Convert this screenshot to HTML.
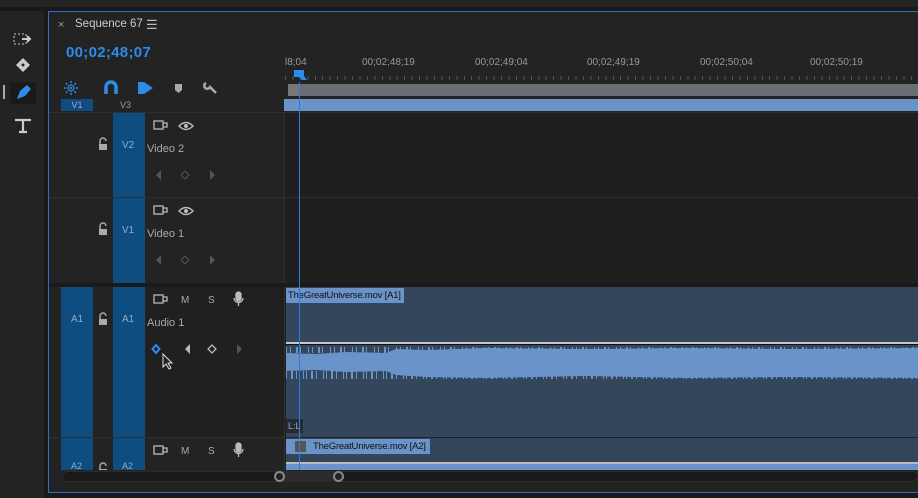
<!DOCTYPE html>
<html><head><meta charset="utf-8"><style>
*{margin:0;padding:0;box-sizing:border-box}
body{width:918px;height:498px;background:#191919;overflow:hidden;position:relative;font-family:"Liberation Sans",sans-serif;color:#b8b8b8}
.a{position:absolute;white-space:nowrap}
.t{font-size:10px;color:#aaa}
</style></head><body>
<div class="a" style="left:0;top:0;width:918px;height:7px;background:#232323"></div>
<!-- left toolbar -->
<div class="a" style="left:0;top:11px;width:44px;height:487px;background:#232323"></div>
<svg class="a" style="left:0;top:25px" width="44" height="110">
<rect x="14" y="9" width="12" height="10" fill="none" stroke="#ccc" stroke-dasharray="2 2"/>
<path d="M22 14h8M27 11l3 3-3 3" stroke="#ccc" stroke-width="2" fill="none"/>
<path d="M16 40l7-7 7 7-7 7z" fill="#ccc"/><circle cx="23" cy="40" r="1.5" fill="#232323"/>
<rect x="10" y="57" width="26" height="22" rx="2" fill="#1a1a1a"/>
<path d="M17 74l3-8 7-6 4 4-6 7z" fill="#2d8ceb"/>
<path d="M15 95h16M23 95v12M19 107h8" stroke="#ccc" stroke-width="2.2" fill="none"/>
<rect x="3" y="60" width="2" height="14" fill="#aaa"/>
</svg>
<!-- panel -->
<div class="a" style="left:48px;top:11px;width:872px;height:482px;background:#232323;border:1px solid #2e6fc4;border-right:none"></div>
<div class="a t" style="left:58px;top:19px;font-size:11px;color:#999">×</div>
<div class="a" style="left:75px;top:18px;font-size:11.5px;color:#ccc">Sequence 67</div>
<div class="a" style="left:146px;top:17px;font-size:13px;color:#bbb">☰</div>
<div class="a" style="left:66px;top:44px;font-size:15px;color:#2d8ceb;font-weight:bold;letter-spacing:.3px">00;02;48;07</div>
<svg class="a" style="left:60px;top:78px" width="170" height="20">
<path d="M11 3v14M4 10h14M6 5l10 10M16 5L6 15" stroke="#2d8ceb" stroke-width="1.5" stroke-dasharray="2 1"/>
<path d="M46 16v-7a5 5 0 0 1 10 0v7" stroke="#2d8ceb" stroke-width="3.5" fill="none"/>
<path d="M78 4h6v12h-6zM84 4l9 6-9 6z" fill="#2d8ceb"/>
<path d="M115 6h7v6l-3.5 3-3.5-3z" fill="#aaa"/>
<path d="M146 5a3 3 0 1 0 4 4l6 6" stroke="#aaa" stroke-width="2.5" fill="none"/>
</svg>
<div class="a" style="left:61px;top:99px;width:32px;height:12px;background:#0e4d80;font-size:9px;color:#aac;text-align:center;line-height:12px">V1</div>
<div class="a" style="left:120px;top:100px;font-size:9px;color:#999">V3</div>
<!-- timeline bg -->
<div class="a" style="left:285px;top:112px;width:633px;height:358px;background:#1f1f1f"></div>
<div class="a" style="left:284px;top:112px;width:1px;height:358px;background:#2f2f2f"></div>
<!-- rows -->
<div class="a" style="left:49px;top:112px;width:869px;height:1px;background:#2f2f2f"></div>
<div class="a" style="left:49px;top:197px;width:869px;height:1px;background:#2f2f2f"></div>
<div class="a" style="left:49px;top:283px;width:869px;height:4px;background:#1a1a1a"></div>
<div class="a" style="left:49px;top:437px;width:236px;height:1px;background:#2f2f2f"></div>
<!-- blue columns -->
<div class="a" style="left:113px;top:113px;width:32px;height:84px;background:#0e4d80"></div>
<div class="a" style="left:113px;top:198px;width:32px;height:85px;background:#0e4d80"></div>
<div class="a" style="left:113px;top:287px;width:32px;height:150px;background:#0e4d80"></div>
<div class="a" style="left:61px;top:287px;width:32px;height:150px;background:#0e4d80"></div>
<div class="a" style="left:113px;top:438px;width:32px;height:32px;background:#0e4d80"></div>
<div class="a" style="left:61px;top:438px;width:32px;height:32px;background:#0e4d80"></div>
<div class="a" style="left:146px;top:287px;width:138px;height:150px;background:#202020"></div>
<div class="a t" style="left:122px;top:140px;color:#9ab">V2</div>
<div class="a t" style="left:122px;top:225px;color:#9ab">V1</div>
<div class="a t" style="left:122px;top:314px;color:#9ab">A1</div>
<div class="a t" style="left:71px;top:314px;color:#9ab">A1</div>
<div class="a" style="left:147px;top:143px;font-size:11px;color:#aaa">Video 2</div>
<div class="a" style="left:147px;top:228px;font-size:11px;color:#aaa">Video 1</div>
<div class="a" style="left:147px;top:317px;font-size:11px;color:#aaa">Audio 1</div>
<svg class="a" style="left:95px;top:113px" width="160" height="360">
<g fill="#aaa"><rect x="4" y="31" width="8" height="6"/><path d="M5 31v-3a3 3 0 0 1 6 0" stroke="#aaa" fill="none" stroke-width="1.5"/></g>
<g fill="#aaa"><rect x="4" y="116" width="8" height="6"/><path d="M5 116v-3a3 3 0 0 1 6 0" stroke="#aaa" fill="none" stroke-width="1.5"/></g>
<g fill="#aaa"><rect x="4" y="206" width="8" height="6"/><path d="M5 206v-3a3 3 0 0 1 6 0" stroke="#aaa" fill="none" stroke-width="1.5"/></g>
<g fill="#aaa"><rect x="4" y="356" width="8" height="6"/><path d="M5 356v-3a3 3 0 0 1 6 0" stroke="#aaa" fill="none" stroke-width="1.5"/></g>
<g stroke="#bbb" fill="none" stroke-width="1.3">
<rect x="59" y="8" width="9" height="8"/><path d="M68 10h4v4h-4"/>
<rect x="59" y="93" width="9" height="8"/><path d="M68 95h4v4h-4"/>
<rect x="59" y="182" width="9" height="8"/><path d="M68 184h4v4h-4"/>
<rect x="59" y="333" width="9" height="8"/><path d="M68 335h4v4h-4"/>
<path d="M84 13q7-7 14 0q-7 7-14 0z"/><path d="M84 98q7-7 14 0q-7 7-14 0z"/>
<rect x="141" y="179" width="5" height="9" rx="2.5" fill="#bbb"/><path d="M139 185a4.5 4.5 0 0 0 9 0M143.5 190v3"/>
<rect x="141" y="330" width="5" height="9" rx="2.5" fill="#bbb"/><path d="M139 336a4.5 4.5 0 0 0 9 0M143.5 341v3"/>
</g>
<circle cx="91" cy="13" r="2" fill="#bbb"/><circle cx="91" cy="98" r="2" fill="#bbb"/>
<text x="86" y="190" font-size="10" fill="#aaa" font-family="Liberation Sans">M</text>
<text x="113" y="190" font-size="10" fill="#aaa" font-family="Liberation Sans">S</text>
<text x="86" y="341" font-size="10" fill="#aaa" font-family="Liberation Sans">M</text>
<text x="113" y="341" font-size="10" fill="#aaa" font-family="Liberation Sans">S</text>
<g fill="#555"><path d="M66 57l-5 5 5 5zM115 57l5 5-5 5z"/><path d="M66 142l-5 5 5 5zM115 142l5 5-5 5z"/></g>
<path d="M90 58l4 4-4 4-4-4z M90 143l4 4-4 4-4-4z" fill="none" stroke="#555"/>
<path d="M95 231l-5 5 5 5z" fill="#bbb"/><path d="M117 232l4 4-4 4-4-4z" fill="none" stroke="#bbb" stroke-width="1.3"/>
<path d="M142 231l5 5-5 5z" fill="#555"/>
<path d="M61 232l3.5 4-3.5 4-3.5-4z" fill="none" stroke="#2d8ceb" stroke-width="2"/>
<path d="M68 241v13l3-3 3 5 2-1-3-5h4z" fill="#222" stroke="#ddd"/>
</svg>
<!-- ruler -->
<div class="a" style="left:285px;top:57px;width:633px;font-size:10px;color:#999">
<span class="a" style="left:0">l8;04</span><span class="a" style="left:77px">00;02;48;19</span><span class="a" style="left:190px">00;02;49;04</span><span class="a" style="left:302px">00;02;49;19</span><span class="a" style="left:415px">00;02;50;04</span><span class="a" style="left:525px">00;02;50;19</span></div>
<div class="a" style="left:285px;top:76px;width:633px;height:4px;background:repeating-linear-gradient(90deg,#555 0 1px,transparent 1px 7.45px)"></div>
<div class="a" style="left:288px;top:84px;width:630px;height:12px;background:#6a6d73"></div>
<div class="a" style="left:288px;top:84px;width:12px;height:12px;background:#777"></div>
<div class="a" style="left:284px;top:99px;width:634px;height:12px;background:#6a93c9"></div>
<!-- A1 clip -->
<div class="a" style="left:286px;top:287px;width:632px;height:150px;background:#34465c"></div>
<div class="a" style="left:286px;top:288px;width:118px;height:15px;background:#6a93c9;font-size:9.5px;color:#111;line-height:15px;padding-left:2px;letter-spacing:-.2px;overflow:hidden">TheGreatUniverse.mov [A1]</div>
<div class="a" style="left:286px;top:342px;width:632px;height:2px;background:#c8c8c8"></div>
<div class="a" style="left:286px;top:344px;width:632px;height:1px;background:#111"></div>
<div class="a" style="left:286px;top:437px;width:632px;height:1px;background:#222"></div>
<svg class="a" style="left:286px;top:345px" width="632" height="40">
<path d="M0 8 L30 9 L60 7 L100 8 L110 4 L140 5 L200 3 L300 4 L400 3 L500 4 L632 3 L632 33 L500 32 L400 33 L300 31 L200 33 L140 32 L110 30 L100 26 L60 27 L30 25 L0 26Z" fill="#6a93c9"/>
<path d="M0 5H632" stroke="#6a93c9" stroke-width="6" stroke-dasharray="1 3 1 5 2 2 1 7"/>
<path d="M0 30H632" stroke="#6a93c9" stroke-width="8" stroke-dasharray="1 4 2 3 1 6 1 2"/>
</svg>
<div class="a" style="left:286px;top:419px;width:17px;height:14px;background:#222b36;font-size:9px;color:#aaa;line-height:14px;padding-left:2px">L:L</div>
<!-- A2 -->
<div class="a" style="left:286px;top:438px;width:632px;height:32px;background:#34465c"></div>
<div class="a" style="left:286px;top:439px;width:144px;height:15px;background:#6a93c9;font-size:9.5px;color:#111;line-height:15px;padding-left:27px;letter-spacing:-.2px;overflow:hidden">TheGreatUniverse.mov [A2]</div>
<div class="a" style="left:295px;top:441px;width:11px;height:11px;background:#555"></div>
<div class="a" style="left:286px;top:462px;width:632px;height:2px;background:#bbb"></div>
<div class="a" style="left:286px;top:464px;width:632px;height:6px;background:#6a93c9"></div>
<div class="a t" style="left:71px;top:461px;color:#9ab;font-size:9px">A2</div>
<div class="a t" style="left:122px;top:461px;color:#9ab;font-size:9px">A2</div>
<div class="a" style="left:49px;top:470px;width:869px;height:22px;background:#232323"></div>
<!-- scrollbar -->
<div class="a" style="left:62px;top:471px;width:856px;height:11px;border-radius:6px;background:#1a1a1a;border:1px solid #2c2c2c"></div>
<div class="a" style="left:279px;top:472px;width:60px;height:9px;background:#2c2c2c"></div>
<div class="a" style="left:274px;top:471px;width:11px;height:11px;border-radius:50%;border:2px solid #888;background:#222"></div>
<div class="a" style="left:333px;top:471px;width:11px;height:11px;border-radius:50%;border:2px solid #888;background:#222"></div>
<!-- playhead -->
<div class="a" style="left:299px;top:82px;width:1px;height:388px;background:#2d7be0"></div>
<svg class="a" style="left:293px;top:69px" width="16" height="14"><path d="M1 1h10v6l3 4h-5l-3-3h-5z" fill="#2d8ceb"/></svg>
</body></html>
